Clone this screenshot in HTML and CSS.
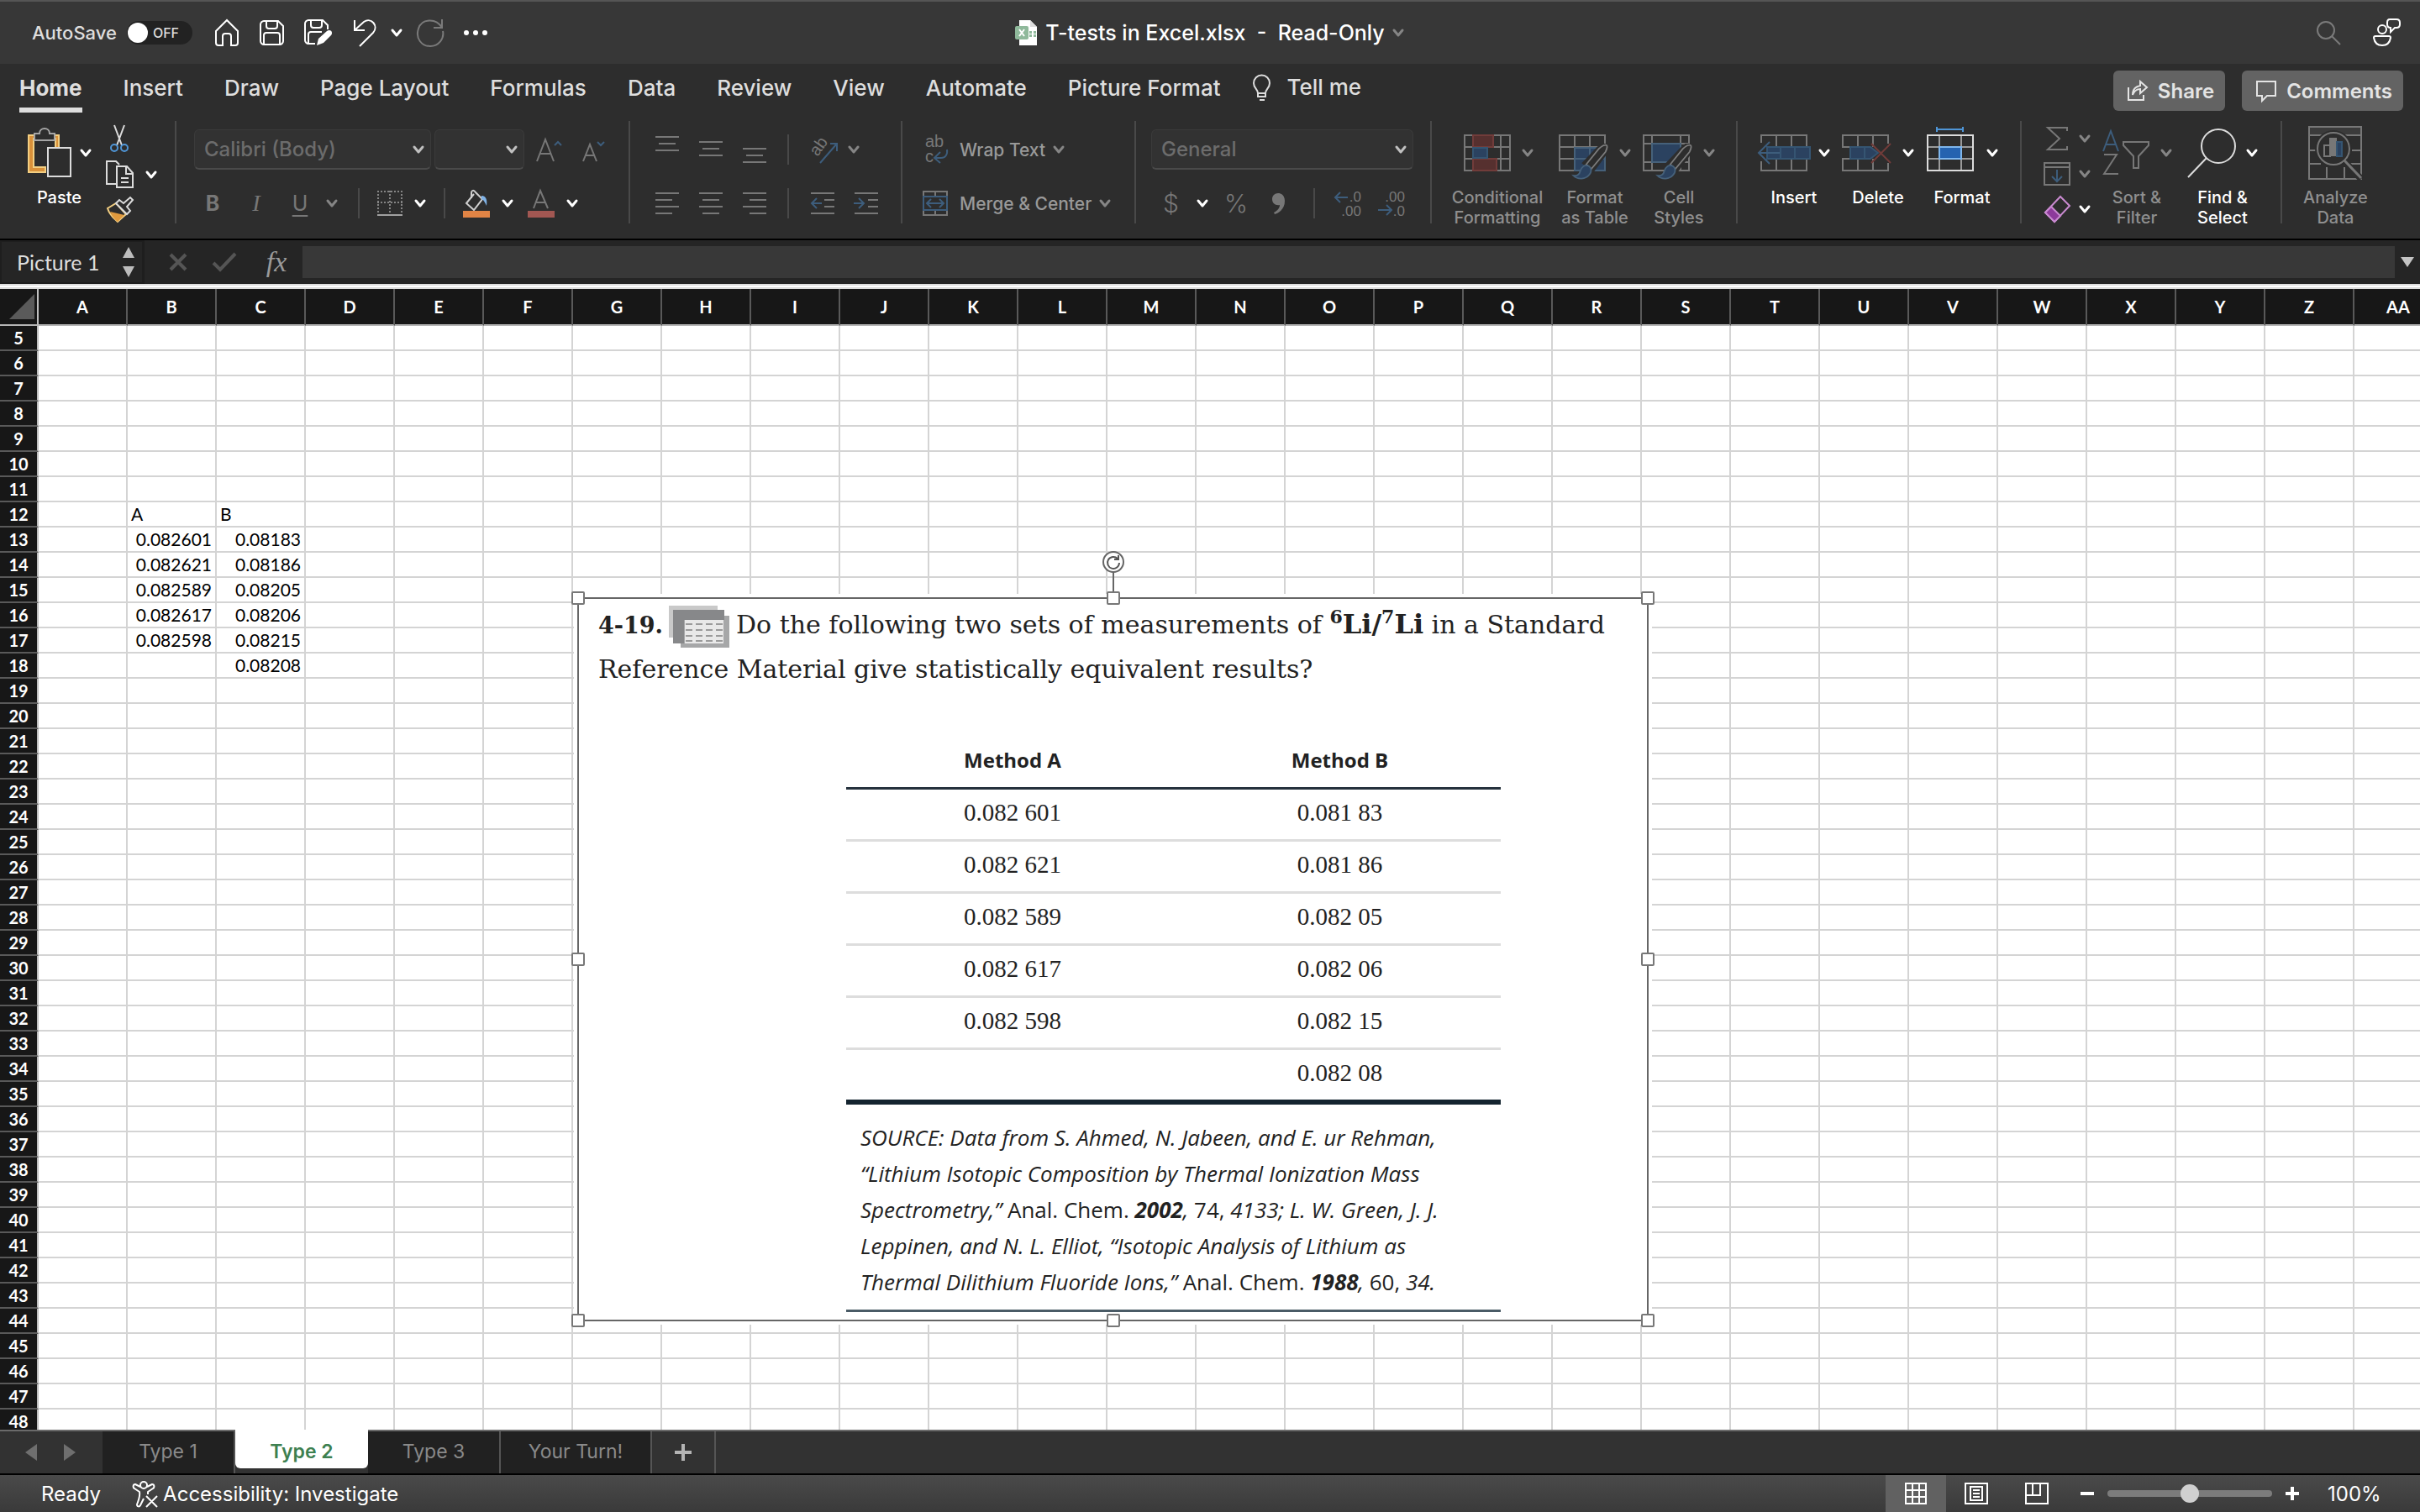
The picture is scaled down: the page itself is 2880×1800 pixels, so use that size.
FILE: index.html
```
<!DOCTYPE html>
<html lang="en">
  <head>
    <meta charset="UTF-8" />
    <meta name="viewport" content="width=device-width, initial-scale=1.0" />
    <title>T-tests in Excel.xlsx</title>
    <link rel="stylesheet" href="styles.css">
  </head>
  <body>
    <!-- Shared icons -->
    <svg class="defs" aria-hidden="true">
      <symbol id="chev" viewBox="0 0 16 16"><path d="M3 5l5 6 5-6" fill="none" stroke="currentColor" stroke-width="3" stroke-linecap="round" stroke-linejoin="round" /></symbol>
      <symbol id="brush" viewBox="0 0 48 52">
        <path d="M43 2c5-1 3 5 1 9L27 34l-10-8L35 7c3-3 5-5 8-5z" fill="#2d2d2d" stroke="#2d2d2d" stroke-width="7" />
        <path d="M43 2c5-1 3 5 1 9L25 34l-7-6L35 7c3-3 5-5 8-5z" fill="#2d2d2d" stroke="#7d7d7d" stroke-width="2" />
        <path d="M1 43c6 1 8-2 9-6 2-6 6-9 11-7 4 2 5 8 1 12-5 6-15 7-21 1z" fill="#2b4260" stroke="#46617a" stroke-width="2" />
      </symbol>
    </svg>

    <!-- Title bar -->
    <header class="titlebar">
      <div class="quick">
        <label for="autosave">AutoSave</label>
        <span class="switch"><input type="checkbox" id="autosave" /><span>OFF</span></span>
        <button class="tool" aria-label="Home"><svg width="32" height="34" viewBox="0 0 32 34"><path d="M3 15L16 2l13 13v14c0 2-1 3-3 3h-5V21c0-2-1-3-3-3h-4c-2 0-3 1-3 3v11H6c-2 0-3-1-3-3z" class="l" /></svg></button>
        <button class="tool" aria-label="Save"><svg width="30" height="30" viewBox="0 0 30 30"><path d="M5 1h17l6 6v18c0 2-2 4-4 4H5c-2 0-4-2-4-4V5c0-2 2-4 4-4zM8 1v6c0 2 1 3 3 3h7c2 0 3-1 3-3V1M5 29V18c0-2 1-3 3-3h13c2 0 3 1 3 3v11" class="l" /></svg></button>
        <button class="tool" aria-label="Save as"><svg width="34" height="32" viewBox="0 0 34 32"><path d="M13 29H5c-2 0-4-2-4-4V5c0-2 2-4 4-4h17l6 6v5M8 1v6c0 2 1 3 3 3h7c2 0 3-1 3-3V1M5 29V18c0-2 1-3 3-3h13" class="l" /><path d="M15 31l2-8 10-9c4-3 8 1 5 5l-9 9z" fill="#fff" /></svg></button>
        <button class="tool" aria-label="Undo"><svg width="30" height="34" viewBox="0 0 30 34"><path d="M3 2v12h12M3 14L14 4c9-6 18 5 11 13L9 33" class="l" /></svg></button>
        <svg class="chev on"><use href="#chev" /></svg>
        <button class="tool dim" aria-label="Redo"><svg width="34" height="34" viewBox="0 0 34 34"><path d="M31 1v10H21M31 11C24-1 7 0 3 12s4 21 14 21 17-9 15-18" class="l" /></svg></button>
        <button class="tool" aria-label="More"><svg width="28" height="8" viewBox="0 0 28 8"><g fill="#fff"><circle cx="3" cy="4" r="3" /><circle cx="14" cy="4" r="3" /><circle cx="25" cy="4" r="3" /></g></svg></button>
      </div>
      <h1 class="doc">
        <svg width="28" height="32" viewBox="0 0 28 32"><path d="M5 1h13l8 8v22H5z" fill="#fff" /><path d="M18 1v8h8" fill="#ddd" /><g fill="#8fb99b"><path d="M17 14h3v3h-3zM22 14h3v3h-3zM17 18h3v3h-3zM22 18h3v3h-3z" /><rect x="0" y="8" width="16" height="16" rx="2" /></g><path d="M5 12l6 8M11 12l-6 8" stroke="#fff" stroke-width="2" /></svg>
        <span>T-tests in Excel.xlsx&nbsp; -&nbsp; Read-Only</span>
        <svg class="chev"><use href="#chev" /></svg>
      </h1>
      <div class="account">
        <button class="tool dim" aria-label="Search"><svg width="30" height="30" viewBox="0 0 30 30"><path d="M19 19l10 10" class="l" /><circle cx="12" cy="12" r="10" class="l" /></svg></button>
        <button class="tool" aria-label="Presence"><svg width="34" height="34" viewBox="0 0 34 34"><path d="M3 21h16c1 0 2 1 2 2-1 6-5 9-10 9S2 29 1 23c0-1 1-2 2-2zM20 1h8c3 0 4 2 4 4v2c0 3-2 4-4 4h-2l-5 5v-5c-3 0-4-2-4-4V5c0-2 1-4 3-4z" class="l" /><circle cx="11" cy="13" r="5" class="l" /></svg></button>
      </div>
    </header>

    <!-- Ribbon tabs -->
    <nav class="tabs">
      <a href="#" class="active">Home</a>
      <a href="#">Insert</a>
      <a href="#">Draw</a>
      <a href="#">Page Layout</a>
      <a href="#">Formulas</a>
      <a href="#">Data</a>
      <a href="#">Review</a>
      <a href="#">View</a>
      <a href="#">Automate</a>
      <a href="#">Picture Format</a>
      <a href="#" class="tell"><svg width="24" height="32" viewBox="0 0 24 32"><path d="M7 22c0-5-5-6-5-12a9 9 0 0 1 19 0c0 6-5 7-5 12zM7 22v4h9v-4M9 30h6" fill="none" stroke="#dedede" stroke-width="2" /></svg>Tell me</a>
      <div class="actions">
        <button class="pill"><svg width="26" height="26" viewBox="0 0 26 26"><path d="M2 9v15h18v-6M7 18c0-7 3-10 9-11V2l8 7-8 7v-5c-4 0-7 2-9 7z" fill="none" stroke="#e4e4e4" stroke-width="2" /></svg>Share</button>
        <button class="pill"><svg width="26" height="26" viewBox="0 0 26 26"><path d="M2 2h22v17H14l-6 6v-6H2z" fill="none" stroke="#e4e4e4" stroke-width="2" /></svg>Comments</button>
      </div>
    </nav>

    <!-- Ribbon -->
    <section class="ribbon">
      <div class="group clip">
        <button class="big on">
          <span class="art">
            <svg width="58" height="62" viewBox="0 0 58 62"><path d="M10 10H3v44h20v-6H9V14h26v11h4V10h-7z" fill="#d9913a" stroke="#f3cf82" stroke-width="2" /><path d="M10 8h6c0-8 12-8 12 0h6v8H10z" fill="#2d2d2d" stroke="#a5a5a5" stroke-width="2" /><path d="M26 25h27v34H26z" fill="#2d2d2d" stroke="#dcdcdc" stroke-width="2" /></svg>
            <svg class="chev"><use href="#chev" /></svg>
          </span>
          Paste
        </button>
        <div class="stack">
          <button class="row on" aria-label="Cut"><svg width="32" height="34" viewBox="0 0 32 34"><path d="M10 1l9 24M22 1l-9 24" stroke="#dcdcdc" stroke-width="2" /><g fill="none" stroke="#4f95d6" stroke-width="2"><circle cx="10" cy="28" r="4" /><circle cx="22" cy="28" r="4" /></g></svg></button>
          <button class="row on" aria-label="Copy"><svg width="34" height="34" viewBox="0 0 34 34"><path d="M12 28H1V1h11l4 4M13 7h12l7 8v17H13zM24 7v9h8M18 21h9M18 26h9" fill="none" stroke="#dcdcdc" stroke-width="2" /></svg><svg class="chev"><use href="#chev" /></svg></button>
          <button class="row on" aria-label="Format painter"><svg width="34" height="32" viewBox="0 0 34 32"><path d="M2 14l10-6 12 13-10 9C8 25 4 21 2 14z" fill="#2d2d2d" stroke="#f3cf82" stroke-width="2" /><path d="M5 18l17 4-8 8c-4-3-7-7-9-12z" fill="#e09a3e" /><path d="M12 8l4-4 5 4 8-7 3 3-7 8 4 5-4 4z" fill="#2d2d2d" stroke="#dcdcdc" stroke-width="2" /></svg></button>
        </div>
      </div>

      <div class="group font">
        <div class="line">
          <span class="drop name"><select aria-label="Font"><option>Calibri (Body)</option></select><svg class="chev"><use href="#chev" /></svg></span>
          <span class="drop size"><select aria-label="Font size"><option></option></select><svg class="chev"><use href="#chev" /></svg></span>
          <button class="tool first" aria-label="Increase font size"><svg width="34" height="34" viewBox="0 0 34 34"><path d="M2 31L12 5l10 26M6 22h12" class="g" /><path d="M23 12l4-4 4 4" class="b" /></svg></button>
          <button class="tool" aria-label="Decrease font size"><svg width="34" height="34" viewBox="0 0 34 34"><path d="M3 31l8-20 8 20M6 24h10" class="g" /><path d="M20 8l4 4 4-4" class="b" /></svg></button>
        </div>
        <div class="line marks">
          <button class="letter"><b>B</b></button>
          <button class="letter"><i>I</i></button>
          <button class="letter"><u>U</u></button>
          <svg class="chev"><use href="#chev" /></svg>
          <span class="bar"></span>
          <button class="pair on" aria-label="Borders"><svg width="32" height="32" viewBox="0 0 32 32"><path d="M2 1v27M16 1v27M30 1v27M1 2h30M1 15h30" fill="none" stroke="#858585" stroke-width="2" stroke-dasharray="2 2" /><path d="M1 30h30" stroke="#a0a0a0" stroke-width="2" /></svg><svg class="chev"><use href="#chev" /></svg></button>
          <span class="bar"></span>
          <button class="pair on" aria-label="Fill color"><svg width="34" height="34" viewBox="0 0 34 34"><path d="M14 6L5 17l9 8 10-13-8-8c-2-3-5-3-5 1v6" fill="none" stroke="#d0d0d0" stroke-width="2" /><path d="M23 8c6 0 7 6 6 12-2-4-3-7-6-8z" fill="#7fb2e6" /><path d="M1 26h32v8H1z" fill="#e18445" /></svg><svg class="chev"><use href="#chev" /></svg></button>
          <button class="pair on" aria-label="Font color"><svg width="34" height="34" viewBox="0 0 34 34"><path d="M8 23l8-21 9 21M11 16h11" class="g" /><path d="M1 26h32v8H1z" fill="#a25752" /></svg><svg class="chev"><use href="#chev" /></svg></button>
        </div>
      </div>

      <div class="group align">
        <div class="line">
          <button class="tool" aria-label="Top align"><svg width="30" height="34" viewBox="0 0 30 34"><path d="M1 2h28M5 10h20M1 18h28" class="g" /></svg></button>
          <button class="tool" aria-label="Middle align"><svg width="30" height="34" viewBox="0 0 30 34"><path d="M1 8h28M5 16h20M1 24h28" class="g" /></svg></button>
          <button class="tool" aria-label="Bottom align"><svg width="30" height="34" viewBox="0 0 30 34"><path d="M1 16h28M5 24h20M1 32h28" class="g" /></svg></button>
          <span class="bar"></span>
          <button class="pair" aria-label="Orientation"><svg width="34" height="34" viewBox="0 0 34 34"><text x="9" y="26" transform="rotate(-55 9 26)" class="gt">ab</text><path d="M12 33l20-23M24 10h8v9" class="b" /></svg><svg class="chev"><use href="#chev" /></svg></button>
        </div>
        <div class="line">
          <button class="tool" aria-label="Align left"><svg width="30" height="30" viewBox="0 0 30 30"><path d="M1 3h28M1 11h20M1 19h28M1 27h20" class="g" /></svg></button>
          <button class="tool" aria-label="Center"><svg width="30" height="30" viewBox="0 0 30 30"><path d="M1 3h28M5 11h20M1 19h28M5 27h20" class="g" /></svg></button>
          <button class="tool" aria-label="Align right"><svg width="30" height="30" viewBox="0 0 30 30"><path d="M1 3h28M9 11h20M1 19h28M9 27h20" class="g" /></svg></button>
          <span class="bar"></span>
          <button class="tool" aria-label="Decrease indent"><svg width="30" height="30" viewBox="0 0 30 30"><path d="M1 3h28M17 11h12M17 19h12M1 27h28" class="g" /><path d="M14 15H2M8 9l-6 6 6 6" class="b" /></svg></button>
          <button class="tool" aria-label="Increase indent"><svg width="30" height="30" viewBox="0 0 30 30"><path d="M1 3h28M17 11h12M17 19h12M1 27h28" class="g" /><path d="M0 15h12M6 9l6 6-6 6" class="b" /></svg></button>
        </div>
      </div>

      <div class="group wrap">
        <button class="row"><svg width="32" height="34" viewBox="0 0 32 34"><text x="4" y="14" class="gt">ab</text><text x="4" y="32" class="gt">c</text><path d="M30 17c1 6-2 10-7 10h-7M22 20l-7 7 7 6" class="b" /></svg>Wrap Text <svg class="chev"><use href="#chev" /></svg></button>
        <button class="row"><svg width="32" height="32" viewBox="0 0 32 32"><path d="M2 7V2h28v5M16 2v5M2 24v6h28v-6M16 24v6" class="g" /><path d="M2 8h28v16H2zM6 16h20M11 11l-5 5 5 5M21 11l5 5-5 5" class="b" /></svg>Merge &amp; Center <svg class="chev"><use href="#chev" /></svg></button>
      </div>

      <div class="group number">
        <div class="line">
          <span class="drop format"><select aria-label="Number format"><option>General</option></select><svg class="chev"><use href="#chev" /></svg></span>
        </div>
        <div class="line">
          <button class="sign on"><span>$</span><svg class="chev"><use href="#chev" /></svg></button>
          <button class="sign">%</button>
          <button class="tool comma" aria-label="Comma style"><svg width="20" height="30" viewBox="0 0 20 30"><path d="M9 3c5 0 8 4 8 9 0 8-4 13-12 16l-1-2c4-2 7-5 7-9-5 1-9-2-9-7 0-4 3-7 7-7z" fill="#777" /></svg></button>
          <span class="bar"></span>
          <button class="tool" aria-label="Increase decimal"><svg width="34" height="34" viewBox="0 0 34 34"><path d="M17 10H2M8 4l-6 6 6 6" class="b" /><text x="33" y="15" text-anchor="end" class="nt">.0</text><text x="33" y="32" text-anchor="end" class="nt">.00</text></svg></button>
          <button class="tool" aria-label="Decrease decimal"><svg width="34" height="34" viewBox="0 0 34 34"><path d="M1 25h16M11 19l6 6-6 6" class="b" /><text x="33" y="15" text-anchor="end" class="nt">.00</text><text x="33" y="32" text-anchor="end" class="nt">.0</text></svg></button>
        </div>
      </div>

      <div class="group styles">
        <button class="big">
          <span class="art"><svg width="64" height="62" viewBox="0 0 64 62"><path d="M5 10h54v42H5zM5 24h54M5 38h54M15 10v42M48 10v42" class="g" /><path d="M15 10h24v14H15zM15 38h28v14H15z" fill="#56302f" stroke="#713c3a" stroke-width="2" /><path d="M15 25h17v12H15z" fill="#2b4260" stroke="#355572" stroke-width="2" /></svg><svg class="chev"><use href="#chev" /></svg></span>
          Conditional<br>Formatting
        </button>
        <button class="big">
          <span class="art"><svg width="64" height="62" viewBox="0 0 64 62"><path d="M2 10h54v42H2zM2 24h54M2 38h54M20 10v42M38 10v42" class="g" /><path d="M20 25h36v27H20zM38 25v27M20 38h36" fill="#2b4260" stroke="#46617a" stroke-width="2" /><use href="#brush" x="15" y="20" width="48" height="46" /></svg><svg class="chev"><use href="#chev" /></svg></span>
          Format<br>as Table
        </button>
        <button class="big">
          <span class="art"><svg width="64" height="62" viewBox="0 0 64 62"><path d="M2 10h54v42H2zM2 20h54M2 42h54M12 10v42M46 10v42" class="g" /><path d="M12 20h34v22H12z" fill="#2b4260" stroke="#46617a" stroke-width="2" /><use href="#brush" x="15" y="20" width="48" height="46" /></svg><svg class="chev"><use href="#chev" /></svg></span>
          Cell<br>Styles
        </button>
      </div>

      <div class="group cells">
        <button class="big on">
          <span class="art"><svg width="64" height="62" viewBox="0 0 64 62"><path d="M5 19v-9h54v14M5 41v11h54V38M23 10v42M41 10v42" class="g" /><path d="M12 24h51v14H12zM45 24v14M28 24v14" fill="#2b4260" stroke="#355572" stroke-width="2" /><path d="M2 31h25M15 18L2 31l13 13" fill="none" stroke="#3d5d7c" stroke-width="2" /></svg><svg class="chev"><use href="#chev" /></svg></span>
          Insert
        </button>
        <button class="big on">
          <span class="art"><svg width="64" height="62" viewBox="0 0 64 62"><path d="M22 24H2V10h54v10M22 38H2v14h54V43M20 10v14M38 10v14M20 38v14M38 38v14" class="g" /><path d="M11 24h24l9 7-9 7H11zM28 24v14" fill="#2b4260" stroke="#355572" stroke-width="2" /><path d="M36 20l23 23M59 20L36 43" stroke="#713c3a" stroke-width="2" /></svg><svg class="chev"><use href="#chev" /></svg></span>
          Delete
        </button>
        <button class="big on">
          <span class="art"><svg width="64" height="62" viewBox="0 0 64 62"><path d="M3 24h54M3 38h54M17 10v42M43 10v42" stroke="#9a9a9a" stroke-width="2" /><path d="M3 10h54v42H3z" fill="none" stroke="#dcdcdc" stroke-width="2" /><path d="M17 24h26v14H17z" fill="#2563b0" stroke="#7fb6ec" stroke-width="2" /><path d="M14 3h31M14 0v6M45 0v6" stroke="#4f95d6" stroke-width="2" /></svg><svg class="chev"><use href="#chev" /></svg></span>
          Format
        </button>
      </div>

      <div class="group editing">
        <div class="stack">
          <button class="row" aria-label="AutoSum"><svg width="34" height="34" viewBox="0 0 34 34"><path d="M29 8V4H6l14 13L6 30h23v-4" class="g" /></svg><svg class="chev"><use href="#chev" /></svg></button>
          <button class="row" aria-label="Fill"><svg width="34" height="34" viewBox="0 0 34 34"><path d="M2 4h30v26H2zM2 9h30" class="g" /><path d="M17 12v14M11 20l6 6 6-6" class="b" /></svg><svg class="chev"><use href="#chev" /></svg></button>
          <button class="row on" aria-label="Clear"><svg width="34" height="34" viewBox="0 0 34 34"><path d="M3 21l18-19 11 11-18 19z" fill="none" stroke="#c98ad0" stroke-width="2" /><path d="M3 21l7-7 11 11-7 7z" fill="#8d3a9b" stroke="#c98ad0" stroke-width="2" /></svg><svg class="chev"><use href="#chev" /></svg></button>
        </div>
        <button class="big">
          <span class="art"><svg width="60" height="62" viewBox="0 0 60 62"><path d="M3 29l9-24 9 24M6 21h12" class="b" /><path d="M4 33h15L4 56h17" class="g" /><path d="M27 18h30v4L45 35v14h-6V35L27 22z" class="g" /></svg><svg class="chev"><use href="#chev" /></svg></span>
          Sort &amp;<br>Filter
        </button>
        <button class="big on">
          <span class="art"><svg width="60" height="62" viewBox="0 0 60 62"><g fill="none" stroke="#dcdcdc" stroke-width="2"><circle cx="38" cy="23" r="20" /><path d="M24 37L2 60" /></g></svg><svg class="chev"><use href="#chev" /></svg></span>
          Find &amp;<br>Select
        </button>
      </div>

      <div class="group analyze">
        <button class="big">
          <span class="art"><svg width="64" height="66" viewBox="0 0 64 66"><path d="M1 2h62v10H1z" fill="#3b3b3b" /><path d="M1 2h62v62H1zM1 12h62M1 30h10M52 30h11M1 46h14M50 46h13M22 50v14M43 50v14" class="g" /><circle cx="30" cy="28" r="22" fill="#2d2d2d" /><circle cx="30" cy="28" r="19" class="g" /><path d="M19 24h7v13h-7z" class="g" /><path d="M25 15h9v22h-9z" fill="#777" /><path d="M34 20h6v17h-6z" fill="#2b4260" stroke="#355572" stroke-width="2" /><path d="M43 43l20 21" stroke="#2d2d2d" stroke-width="8" /><path d="M43 42l20 21" stroke="#777" stroke-width="3" /></svg></span>
          Analyze<br>Data
        </button>
      </div>
    </section>

    <!-- Formula bar -->
    <section class="formula">
      <div class="namebox">
        <input type="text" value="Picture 1" aria-label="Name box" />
        <svg width="16" height="38" viewBox="0 0 16 38"><path d="M8 1l7 13H1zM8 37L1 24h14z" fill="#bdbdbd" /></svg>
      </div>
      <button class="tool" aria-label="Cancel"><svg width="24" height="24" viewBox="0 0 24 24"><path d="M3 3l18 18M21 3L3 21" stroke="#555" stroke-width="4" /></svg></button>
      <button class="tool" aria-label="Enter"><svg width="30" height="24" viewBox="0 0 30 24"><path d="M2 13l8 8L28 2" fill="none" stroke="#555" stroke-width="4" /></svg></button>
      <button class="fx">fx</button>
      <input type="text" class="entry" aria-label="Formula" />
      <button class="tool expand" aria-label="Expand formula bar"><svg width="18" height="14" viewBox="0 0 18 14"><path d="M1 1h16L9 13z" fill="#c4c4c4" /></svg></button>
    </section>

    <!-- Worksheet -->
    <main class="sheet">
      <table class="grid" id="grid"></table>

      <!-- Selected picture -->
      <figure class="picture">
        <p class="question">
          <b>4-19.</b>
          <svg width="72" height="50" viewBox="0 0 72 50"><path d="M0 0h58v38H0z" fill="#c9c9c9" /><path d="M5 5h61v40H5z" fill="#909192" /><path d="M14 12h58v38H14z" fill="#a6a7a8" /><path d="M5 5h61v12H18v28H5z" fill="#87888a" /><path d="M19 17h46v28H19z" fill="#e9e9e9" /><path d="M20 22h44M20 29h44M20 36h44M20 42h44" stroke="#9b9b9b" stroke-width="2" stroke-dasharray="8 4" /></svg>
          Do the following two sets of measurements of <span class="ratio"><sup>6</sup>Li/<sup>7</sup>Li</span> in a Standard<br>
          Reference Material give statistically equivalent results?
        </p>
        <table class="methods">
          <thead>
            <tr><th>Method A</th><th>Method B</th></tr>
          </thead>
          <tbody>
            <tr><td>0.082 601</td><td>0.081 83</td></tr>
            <tr><td>0.082 621</td><td>0.081 86</td></tr>
            <tr><td>0.082 589</td><td>0.082 05</td></tr>
            <tr><td>0.082 617</td><td>0.082 06</td></tr>
            <tr><td>0.082 598</td><td>0.082 15</td></tr>
            <tr><td></td><td>0.082 08</td></tr>
          </tbody>
          <tfoot>
            <tr><td colspan="2">SOURCE: Data from S. Ahmed, N. Jabeen, and E. ur Rehman,<br>“Lithium Isotopic Composition by Thermal Ionization Mass<br>Spectrometry,” <em>Anal. Chem.</em> <b>2002</b>, <em>74,</em> 4133; L. W. Green, J. J.<br>Leppinen, and N. L. Elliot, “Isotopic Analysis of Lithium as<br>Thermal Dilithium Fluoride Ions,” <em>Anal. Chem.</em> <b>1988</b>, <em>60,</em> 34.</td></tr>
          </tfoot>
        </table>
        <span class="stem"></span>
        <svg class="rotate" width="28" height="28" viewBox="0 0 28 28"><circle cx="14" cy="14" r="12" fill="#fff" stroke="#666" stroke-width="2" /><path d="M19 10a7 7 0 1 0 2 5M20 6v5h-5" fill="none" stroke="#555" stroke-width="2" /></svg>
        <span class="handle t l"></span>
        <span class="handle t c"></span>
        <span class="handle t r"></span>
        <span class="handle m l"></span>
        <span class="handle m r"></span>
        <span class="handle b l"></span>
        <span class="handle b c"></span>
        <span class="handle b r"></span>
      </figure>
    </main>

    <!-- Sheet tabs -->
    <nav class="sheets">
      <div class="arrows">
        <button class="tool" aria-label="Previous sheet"><svg width="16" height="22" viewBox="0 0 16 22"><path d="M15 1v20L1 11z" fill="#6f6f6f" /></svg></button>
        <button class="tool" aria-label="Next sheet"><svg width="16" height="22" viewBox="0 0 16 22"><path d="M1 1v20l14-10z" fill="#6f6f6f" /></svg></button>
      </div>
      <a href="#">Type 1</a>
      <a href="#" class="active">Type 2</a>
      <a href="#">Type 3</a>
      <a href="#" class="wide">Your Turn!</a>
      <button class="add" aria-label="New sheet"><svg width="20" height="20" viewBox="0 0 20 20"><path d="M10 0v20M0 10h20" stroke="#b4b4b4" stroke-width="4" /></svg></button>
    </nav>

    <!-- Status bar -->
    <footer class="status">
      <span class="ready">Ready</span>
      <a href="#"><svg width="32" height="32" viewBox="0 0 32 32"><g fill="none" stroke="#fff" stroke-width="2" stroke-linejoin="round"><circle cx="14" cy="6" r="4" /><path d="M10 8L4 5C1 5 1 9 3 10l6 4c1 5-1 10-3 15 0 3 3 3 4 1l4-8M18 8l6-3c3 0 3 4 1 5l-6 4v3M17 19l13 13M30 19L17 32" /></g></svg>Accessibility: Investigate</a>
      <div class="views">
        <button class="view active" aria-label="Normal view"><svg width="28" height="28" viewBox="0 0 28 28"><path d="M2 2h24v24H2zM2 10h24M2 18h24M10 2v24M18 2v24" class="l" /></svg></button>
        <button class="view" aria-label="Page layout view"><svg width="28" height="28" viewBox="0 0 28 28"><path d="M1 2h26v24H1zM7 6h14v16H7zM10 10h8M10 14h8M10 18h8" class="l" /></svg></button>
        <button class="view" aria-label="Page break view"><svg width="28" height="28" viewBox="0 0 28 28"><path d="M1 2h26v24H1zM1 16h17V2M9 2v14" class="l" /></svg></button>
        <button class="tool" aria-label="Zoom out"><svg width="16" height="16" viewBox="0 0 16 16"><path d="M0 8h16" stroke="#fff" stroke-width="4" /></svg></button>
        <input type="range" min="0" max="100" value="50" aria-label="Zoom" />
        <button class="tool" aria-label="Zoom in"><svg width="16" height="16" viewBox="0 0 16 16"><path d="M0 8h16M8 0v16" stroke="#fff" stroke-width="4" /></svg></button>
        <span class="percent">100%</span>
      </div>
    </footer>

    <script src="script.js"></script>
  </body>
</html>
```
FILE: styles.css
```
* {
  margin: 0;
  padding: 0;
  box-sizing: border-box;
}

body {
  display: flex;
  flex-direction: column;
  height: 100vh;
  overflow: hidden;
  background-color: #2d2d2d;
  color: #dedede;
  font-family: Inter, "Liberation Sans", sans-serif;
}

button,
input,
select {
  border: none;
  background: none;
  color: inherit;
  font: inherit;
}

a {
  color: inherit;
  text-decoration: none;
}

svg {
  display: block;
  flex: none;
  overflow: visible;
}

.defs {
  position: absolute;
  width: 0;
  height: 0;
}

.l {
  fill: none;
  stroke: currentColor;
  stroke-width: 2;
}

.g {
  fill: none;
  stroke: #777;
  stroke-width: 2;
}

.b {
  fill: none;
  stroke: #3d5d7c;
  stroke-width: 2;
}

.gt,
.nt {
  fill: #777;
  font-family: "Liberation Sans", sans-serif;
  font-size: 20px;
}

.nt {
  font-size: 17px;
}

.tool {
  display: flex;
  align-items: center;
  justify-content: center;
  color: #fff;
}

.dim {
  color: #7a7a7a;
}

.chev {
  width: 16px;
  height: 16px;
  color: #858585;
}

.on,
.on .chev {
  color: #fff;
}

/* Title bar */
.titlebar {
  display: grid;
  grid-template-columns: 1fr auto 1fr;
  align-items: center;
  flex: none;
  height: 76px;
  background-color: #373737;
  border-top: 2px solid #555;
}

.quick {
  display: flex;
  align-items: center;
  gap: 23px;
  padding-left: 38px;
  font-size: 22px;
  font-weight: 500;
}

.quick .chev {
  margin: 0 -8px;
}

.switch {
  display: flex;
  align-items: center;
  gap: 6px;
  width: 78px;
  height: 28px;
  margin: 0 2px 0 -11px;
  border-radius: 14px;
  background-color: #222;
  font-size: 16px;
}

.switch input {
  appearance: none;
  width: 24px;
  height: 24px;
  margin-left: 1px;
  border-radius: 50%;
  background-color: #fff;
}

.doc {
  display: flex;
  align-items: center;
  gap: 8px;
  color: #fff;
  font-size: 25px;
  font-weight: 500;
}

.account {
  display: flex;
  justify-content: flex-end;
  gap: 38px;
  padding-right: 22px;
}

/* Ribbon tabs */
.tabs {
  display: flex;
  align-items: center;
  flex: none;
  gap: 49px;
  height: 64px;
  padding: 0 20px 0 23px;
  font-size: 26px;
  font-weight: 500;
}

.tabs a {
  padding: 8px 0;
  line-height: 30px;
  border-bottom: 6px solid transparent;
}

.tabs .active {
  font-weight: 700;
  border-image: linear-gradient(#dedede, #dedede) 1;
}

.tabs .tell {
  display: flex;
  gap: 18px;
  margin-left: -12px;
}

.actions {
  display: flex;
  gap: 20px;
  margin-left: auto;
}

.pill {
  display: flex;
  align-items: center;
  gap: 11px;
  height: 48px;
  padding: 0 13px 0 16px;
  border-radius: 6px;
  background-color: #636363;
  color: #e4e4e4;
  font-size: 24px;
  font-weight: 600;
}

/* Ribbon */
.ribbon {
  display: flex;
  flex: none;
  height: 146px;
  padding: 4px 0 16px;
  border-bottom: 2px solid #000;
  font-size: 20px;
  font-weight: 500;
}

.group {
  display: flex;
  flex: none;
  margin-bottom: 2px;
  border-right: 2px solid #494949;
}

.font,
.align,
.wrap,
.number {
  flex-direction: column;
  gap: 16px;
  padding-top: 10px;
}

.line {
  display: flex;
  align-items: center;
  height: 48px;
}

.bar {
  flex: none;
  width: 2px;
  height: 36px;
  background-color: #494949;
}

.big {
  display: flex;
  flex-direction: column;
  align-items: center;
  align-self: flex-start;
  flex: none;
  padding-top: 5px;
  color: #8f8f8f;
  line-height: 24px;
}

.art {
  display: flex;
  align-items: center;
  gap: 8px;
  height: 66px;
  margin-bottom: 8px;
}

.stack {
  display: flex;
  flex-direction: column;
  justify-content: space-between;
  padding-top: 4px;
}

.row,
.pair,
.sign {
  display: flex;
  align-items: center;
}

.row,
.pair {
  gap: 12px;
  color: #999;
}

.big.on,
.row.on {
  color: #fff;
}

.clip {
  width: 210px;
  gap: 16px;
  padding-left: 31px;
}

.clip .art {
  gap: 5px;
}

.font {
  width: 540px;
  padding-left: 21px;
}

.drop {
  display: grid;
  align-items: center;
  height: 48px;
  border: 1px solid #3b3b3b;
  border-bottom: 2px solid #4a4a4a;
  border-radius: 6px;
  background-color: #323232;
  color: #6c6c6c;
  font-size: 24px;
}

.drop select,
.drop .chev {
  grid-area: 1 / 1;
}

.drop select {
  appearance: none;
  height: 44px;
  padding-left: 11px;
}

.drop .chev {
  justify-self: end;
  margin-right: 6px;
  color: #c0c0c0;
}

.name {
  width: 282px;
}

.size {
  width: 107px;
  margin-left: 4px;
}

.first {
  margin: 0 20px 0 13px;
}

.marks {
  gap: 20px;
  padding-left: 6px;
}

.letter {
  width: 32px;
  color: #777;
  font-size: 25px;
}

.letter i {
  font-family: "Liberation Serif", serif;
  font-size: 28px;
}

.letter u {
  font-weight: 400;
  text-underline-offset: 5px;
}

.marks .pair {
  gap: 12px;
}

.marks .pair + .pair {
  margin-left: -5px;
}

.marks > .chev {
  margin: 0 3px 0 -6px;
}

.align {
  width: 324px;
  padding-left: 29px;
}

.align .line {
  gap: 22px;
}

.align .bar {
  margin: 0 3px 0 2px;
}

.align .pair {
  gap: 10px;
}

.wrap {
  width: 278px;
  padding-left: 23px;
}

.wrap .row {
  gap: 13px;
  height: 48px;
  font-size: 21px;
}

.wrap .chev {
  margin-left: -5px;
}

.number {
  width: 352px;
  padding-left: 18px;
}

.format {
  width: 312px;
}

.sign {
  gap: 20px;
  padding-left: 14px;
  color: #777;
  font-size: 30px;
  font-weight: 300;
}

.sign.on {
  color: #777;
}

.sign + .sign {
  padding-left: 18px;
}

.number .comma {
  margin: 0 31px 0 27px;
}

.number .bar + .tool {
  margin: 0 18px 0 22px;
}

.styles {
  width: 364px;
  padding-left: 20px;
}

.styles .big {
  width: 116px;
}

.styles .big + .big {
  width: 100px;
  margin-left: 8px;
}

.styles .big + .big + .big {
  margin-left: 0;
}

.cells {
  width: 338px;
  padding-left: 17px;
}

.cells .big {
  width: 100px;
}

.editing {
  width: 310px;
  padding-left: 25px;
}

.editing .big {
  width: 102px;
}

.editing .stack {
  width: 61px;
}

.editing .row {
  gap: 8px;
}

.editing .art {
  gap: 10px;
}

.analyze {
  padding-left: 25px;
  border: none;
}

/* Formula bar */
.formula {
  display: flex;
  align-items: center;
  flex: none;
  height: 52px;
  background-color: #252525;
}

.namebox {
  display: flex;
  align-items: center;
  width: 172px;
  height: 100%;
  padding-left: 18px;
  border: 2px solid #1e1e1e;
  border-right-width: 3px;
  font-family: Lato, sans-serif;
  font-size: 25px;
}

.namebox input {
  width: 125px;
}

.formula .tool {
  margin-left: 28px;
}

.fx {
  width: 50px;
  margin: 0 6px 0 22px;
  color: #9a9a9a;
  font: italic 34px "Liberation Serif", serif;
}

.entry {
  flex: 1;
  height: 38px;
  background-color: #383838;
}

.formula .expand {
  width: 30px;
  margin: 0;
}

/* Worksheet */
.sheet {
  position: relative;
  flex: 1;
  overflow: hidden;
  border-top: 6px double #ddd;
  background-color: #fff;
  color: #000;
}

.grid {
  width: 2908px;
  table-layout: fixed;
  border-spacing: 0;
  font: 20px/26px Lato, sans-serif;
}

.grid th {
  width: 106px;
  height: 30px;
  border-right: 2px solid #595959;
  border-bottom: 2px solid #b5b5b5;
  background-color: #171717;
  color: #fff;
  font-weight: 700;
}

.grid thead th {
  height: 44px;
}

.grid .side {
  width: 46px;
  border-right-color: #c0c0c0;
}

.grid .corner {
  padding-left: 10px;
}

.grid tbody th {
  border-bottom-color: #595959;
}

.grid td {
  height: 30px;
  padding: 0 4px;
  border-right: 2px solid #d4d4d4;
  border-bottom: 2px solid #d4d4d4;
  font-size: 21px;
}

.grid .num {
  text-align: right;
}

/* Selected picture */
.picture {
  position: absolute;
  top: 367px;
  left: 687px;
  width: 1275px;
  padding-bottom: 9px;
  border: 2px solid #666;
  outline: 4px solid #fff;
  background-color: #fff;
}

.question {
  padding: 5px 0 0 23px;
  color: #222;
  font: 30px/52px "DejaVu Serif", serif;
  white-space: nowrap;
}

.question b {
  font-size: 27px;
}

.question svg {
  display: inline-block;
  margin: 0 -1px 0 -3px;
  vertical-align: middle;
}

.ratio {
  font-size: 32px;
  font-weight: 700;
  line-height: 0;
}

.ratio sup {
  font-size: 22px;
  line-height: 0;
}

.methods {
  width: 779px;
  margin: 49px 0 0 318px;
  border-spacing: 0;
  color: #222;
  text-align: center;
}

.methods th {
  height: 68px;
  border-bottom: 3px solid #25323d;
  font: 700 24px "Open Sans", sans-serif;
}

.methods th:first-child {
  width: 396px;
}

.methods td {
  height: 62px;
  padding-bottom: 4px;
  border-bottom: 3px solid #ddd;
  font: 29px "Liberation Serif", serif;
}

.methods tbody tr:last-child td {
  height: 65px;
  border-bottom: 6px solid #14242f;
}

.methods tfoot td {
  padding: 18px 0 11px 17px;
  border-bottom: 3px solid #4a5b66;
  font: italic 26px/43px "Open Sans", sans-serif;
  text-align: left;
  white-space: nowrap;
}

.methods em {
  font-style: normal;
}

.handle {
  position: absolute;
  width: 16px;
  height: 16px;
  border: 2px solid #777;
  border-radius: 2px;
  background-color: #fff;
}

.t {
  top: -9px;
}

.m {
  top: calc(50% - 8px);
}

.b.handle {
  bottom: -9px;
}

.l.handle {
  left: -9px;
}

.c {
  left: calc(50% - 8px);
}

.r {
  right: -9px;
}

.stem {
  position: absolute;
  top: -32px;
  left: calc(50% - 1px);
  width: 2px;
  height: 26px;
  background-color: #666;
}

.rotate {
  position: absolute;
  top: -58px;
  left: calc(50% - 14px);
}

/* Sheet tabs */
.sheets {
  display: flex;
  flex: none;
  height: 52px;
  border-top: 2px solid #6a6a6a;
  background-color: #323232;
  font-size: 23px;
}

.arrows {
  display: flex;
  gap: 30px;
  width: 122px;
  padding-left: 29px;
}

.sheets a {
  width: 158px;
  border-right: 2px solid #555;
  background-color: #212121;
  color: #8a8a8a;
  line-height: 48px;
  text-align: center;
}

.sheets .active {
  height: 46px;
  margin-top: -2px;
  border: none;
  border-radius: 0 0 6px 6px;
  background-color: #fff;
  color: #3d8050;
  font-weight: 600;
  line-height: 52px;
}

.sheets .wide {
  width: 180px;
}

.add {
  display: flex;
  align-items: center;
  justify-content: center;
  width: 76px;
  border-right: 2px solid #555;
}

/* Status bar */
.status {
  display: flex;
  align-items: center;
  flex: none;
  gap: 37px;
  height: 46px;
  padding-left: 49px;
  border-top: 2px solid #000;
  background: linear-gradient(#4a4a4a, #3a3a3a);
  color: #fff;
  font-size: 24px;
}

.status a {
  display: flex;
  align-items: center;
  gap: 5px;
}

.views {
  display: flex;
  align-items: center;
  align-self: stretch;
  margin-left: auto;
}

.view {
  display: flex;
  align-items: center;
  justify-content: center;
  align-self: stretch;
  width: 72px;
  color: #fff;
}

.view.active {
  background-color: #616161;
}

.views .tool {
  margin: 0 16px;
}

.views input {
  appearance: none;
  width: 196px;
  height: 8px;
  border-radius: 4px;
  background-color: #7c7c7c;
}

.views input::-webkit-slider-thumb {
  appearance: none;
  width: 22px;
  height: 22px;
  border-radius: 50%;
  background-color: #d0d0d0;
}

.percent {
  width: 128px;
  padding-left: 18px;
}
```
FILE: script.js
```
const columns = [..."ABCDEFGHIJKLMNOPQRSTUVWXYZ", "AA"];

const cells = {
  B12: "A",
  B13: 0.082601,
  B14: 0.082621,
  B15: 0.082589,
  B16: 0.082617,
  B17: 0.082598,
  C12: "B",
  C13: 0.08183,
  C14: 0.08186,
  C15: 0.08205,
  C16: 0.08206,
  C17: 0.08215,
  C18: 0.08208,
};

function buildRow(number) {
  const tds = columns.map((col) => {
    const value = cells[col + number];
    if (value === undefined) return "<td></td>";
    return typeof value === "number" ? `<td class="num">${value}</td>` : `<td>${value}</td>`;
  });
  return `<tr><th class="side">${number}</th>${tds.join("")}</tr>`;
}

let rows = "";
for (let n = 5; n <= 48; n++) rows += buildRow(n);

const corner = '<svg width="32" height="32" viewBox="0 0 32 32"><path d="M31 1v30H1z" fill="#5a5a5a" /></svg>';
document.getElementById("grid").innerHTML =
  `<thead><tr><th class="side corner">${corner}</th>${columns.map((c) => `<th>${c}</th>`).join("")}</tr></thead>` +
  `<tbody>${rows}</tbody>`;
```
